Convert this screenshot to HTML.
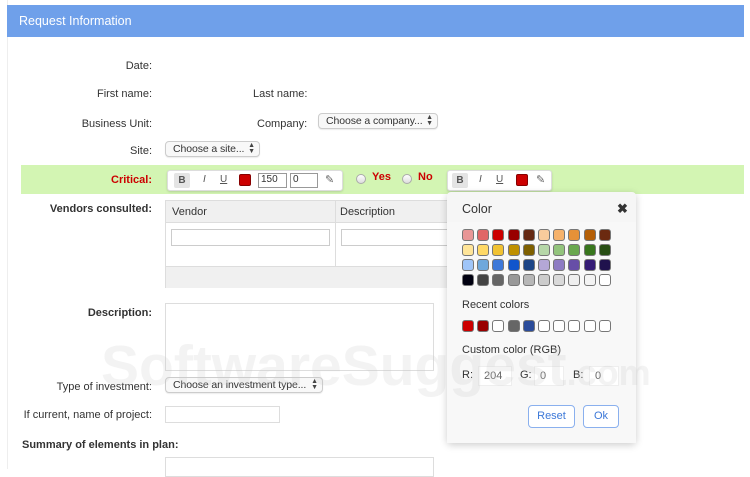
<!DOCTYPE html>
<html><head><meta charset="utf-8"><style>
*{box-sizing:border-box;margin:0;padding:0}
body{width:750px;height:469px;overflow:hidden;background:#fff;font-family:"Liberation Sans",Arial,sans-serif;font-size:11px;color:#333;position:relative}
.a{position:absolute;white-space:nowrap}
.r{text-align:right}
.sel{position:absolute;border:1px solid #ccc;border-radius:4px;background:#f8f8f8;padding:1px 14px 1px 7px;font-size:10.5px;letter-spacing:-0.1px;height:16px;line-height:13px;box-shadow:0 1px 1px rgba(0,0,0,.08);white-space:nowrap;overflow:hidden}
.ar{position:absolute;right:4px;top:1px;font-size:7px;line-height:6px;color:#444}
.inp{position:absolute;border:1px solid #ccc;background:#fff}
.tb{position:absolute;height:21px;border:1px solid #ddd;border-radius:3px;background:#fff;box-shadow:0 1px 2px rgba(0,0,0,.15)}
.tb span{position:absolute;top:3px;font-size:10px;color:#555}
.bb{background:#e4e4e4;border-radius:2px;width:16px;height:15px;text-align:center;line-height:15px;font-weight:bold}
.sw{position:absolute;width:12px;height:12px;border-radius:3px;border:1px solid #777}
.rad{position:absolute;width:10px;height:10px;border-radius:50%;border:1px solid #aaa;background:linear-gradient(#fff,#ddd)}
</style></head><body>
<div class="a" style="left:7px;top:0;width:1px;height:469px;background:#eee"></div>
<div class="a" style="left:7px;top:5px;width:737px;height:32px;background:#6fa0ea"></div>
<div class="a" style="left:19px;top:14px;color:#fff;font-size:12.5px">Request Information</div>

<div class="a r" style="right:598px;top:60px">Date:</div>
<div class="a r" style="right:598px;top:88px">First name:</div>
<div class="a" style="left:253px;top:88px">Last name:</div>
<div class="a r" style="right:598px;top:118px">Business Unit:</div>
<div class="a" style="left:257px;top:118px">Company:</div>
<div class="sel" style="left:318px;top:113px;width:120px">Choose a company...<span class="ar">▲<br>▼</span></div>
<div class="a r" style="right:598px;top:145px">Site:</div>
<div class="sel" style="left:165px;top:141px;width:95px">Choose a site...<span class="ar">▲<br>▼</span></div>

<div class="a" style="left:21px;top:165px;width:723px;height:29px;background:#d3f5b3"></div>
<div class="a r" style="right:598px;top:174px;color:#c00;font-weight:bold">Critical:</div>
<div class="tb" style="left:167px;top:170px;width:176px">
 <span class="bb" style="left:6px;top:2px">B</span>
 <span style="left:35px;font-style:italic">I</span>
 <span style="left:52px;text-decoration:underline">U</span>
 <span style="left:71px;top:3px;width:12px;height:12px;background:#c00;border:1px solid #800;border-radius:2px"></span>
 <span style="left:90px;top:2px;width:29px;height:15px;border:1px solid #999;padding-left:2px;color:#333;font-size:10px">150</span>
 <span style="left:122px;top:2px;width:28px;height:15px;border:1px solid #999;padding-left:2px;color:#333;font-size:10px">0</span>
 <span style="left:157px;top:2px;font-size:11px;color:#666">&#x270E;</span>
</div>
<div class="rad" style="left:356px;top:174px"></div>
<div class="a" style="left:372px;top:171px;color:#c00;font-weight:bold">Yes</div>
<div class="rad" style="left:402px;top:174px"></div>
<div class="a" style="left:418px;top:171px;color:#c00;font-weight:bold">No</div>
<div class="tb" style="left:447px;top:170px;width:105px">
 <span class="bb" style="left:4px;top:2px">B</span>
 <span style="left:31px;font-style:italic">I</span>
 <span style="left:48px;text-decoration:underline">U</span>
 <span style="left:68px;top:3px;width:12px;height:12px;background:#c00;border:1px solid #800;border-radius:2px"></span>
 <span style="left:88px;top:2px;font-size:11px;color:#666">&#x270E;</span>
</div>

<div class="a r" style="right:598px;top:203px;font-weight:bold">Vendors consulted:</div>
<div class="a" style="left:165px;top:200px;width:290px;height:88px;border:1px solid #ddd;background:#fff">
 <div class="a" style="left:0;top:0;width:290px;height:22px;background:#f0f0f0;border-bottom:1px solid #ddd"></div>
 <div class="a" style="left:6px;top:5px">Vendor</div>
 <div class="a" style="left:174px;top:5px">Description</div>
 <div class="a" style="left:169px;top:0;width:1px;height:65px;background:#ddd"></div>
 <div class="inp" style="left:5px;top:28px;width:159px;height:17px"></div>
 <div class="inp" style="left:175px;top:28px;width:120px;height:17px"></div>
 <div class="a" style="left:0;top:65px;width:290px;height:22px;background:#f0f0f0;border-top:1px solid #ddd"></div>
</div>

<div class="a r" style="right:598px;top:307px;font-weight:bold">Description:</div>
<div class="inp" style="left:165px;top:303px;width:269px;height:68px;border-color:#ddd"></div>
<div class="a r" style="right:598px;top:381px">Type of investment:</div>
<div class="sel" style="left:165px;top:377px;width:158px">Choose an investment type...<span class="ar">▲<br>▼</span></div>
<div class="a r" style="right:598px;top:409px">If current, name of project:</div>
<div class="inp" style="left:165px;top:406px;width:115px;height:17px;border-color:#ddd"></div>
<div class="a" style="left:22px;top:439px;font-weight:bold">Summary of elements in plan:</div>
<div class="inp" style="left:165px;top:457px;width:269px;height:20px;border-color:#ddd"></div>

<div class="a" style="left:447px;top:192px;width:189px;height:251px;background:#f6f6f6;border-radius:4px;box-shadow:0 2px 8px rgba(0,0,0,.2)">
 <div class="a" style="left:15px;top:10px;font-size:12.5px;color:#333">Color</div>
 <div class="a" style="left:170px;top:9px;font-size:13px;font-weight:bold;color:#333">&#x2716;</div>
 <div class="a" style="left:0;top:30px;width:189px;height:221px;background:#f8f8f8"></div>
 <div class="a" style="left:15px;top:107px">Recent colors</div>
 <div class="a" style="left:15px;top:152px">Custom color (RGB)</div>
 <div class="a" style="left:15px;top:177px">R:</div>
 <div class="inp" style="left:31px;top:174px;width:34px;height:20px;border-color:#eee;padding:3px 0 0 5px;color:#666">204</div>
 <div class="a" style="left:73px;top:177px">G:</div>
 <div class="inp" style="left:87px;top:174px;width:30px;height:20px;border-color:#eee;padding:3px 0 0 5px;color:#666">0</div>
 <div class="a" style="left:126px;top:177px">B:</div>
 <div class="inp" style="left:142px;top:174px;width:30px;height:20px;border-color:#eee;padding:3px 0 0 5px;color:#666">0</div>
 <div class="a" style="left:81px;top:213px;width:47px;height:23px;border:1px solid #8ab0ee;border-radius:4px;background:#fff;color:#3c78d8;text-align:center;line-height:21px">Reset</div>
 <div class="a" style="left:136px;top:213px;width:36px;height:23px;border:1px solid #8ab0ee;border-radius:4px;background:#fff;color:#3c78d8;text-align:center;line-height:21px">Ok</div>
</div>
<div class="a" id="sw" style="left:447px;top:192px"></div>

<div class="a" style="left:101px;top:333px;font-size:57px;font-weight:bold;color:rgba(200,200,200,.22);letter-spacing:0">SoftwareSuggest<span style="font-size:36px">.com</span></div>

<script>
var rows=[["#e89696","#e06666","#cc0000","#990000","#662a14","#f9cb9c","#f6b26b","#e69138","#b45f06","#6b2a10"],
["#ffe599","#ffd966","#f1c232","#bf9000","#7f6000","#b6d7a8","#93c47d","#6aa84f","#38761d","#274e13"],
["#9fc5f8","#6fa8dc","#3d78d8","#1155cc","#1c4587","#b4a7d6","#8e7cc3","#674ea7","#351c75","#20124d"],
["#000010","#444","#666","#999","#b7b7b7","#ccc","#d9d9d9","#efefef","#f3f3f3","#fff"]];
var h="";
rows.forEach(function(r,i){r.forEach(function(c,j){h+='<div class="sw" style="left:'+(15+j*15.2)+'px;top:'+(37+i*15)+'px;background:'+c+'"></div>';});});
["#cc0000","#990000","#fff","#666","#2b4c9a","#fff","#fff","#fff","#fff","#fff"].forEach(function(c,j){h+='<div class="sw" style="left:'+(15+j*15.2)+'px;top:'+128+'px;background:'+c+'"></div>';});
document.getElementById("sw").innerHTML=h;
</script>
</body></html>
